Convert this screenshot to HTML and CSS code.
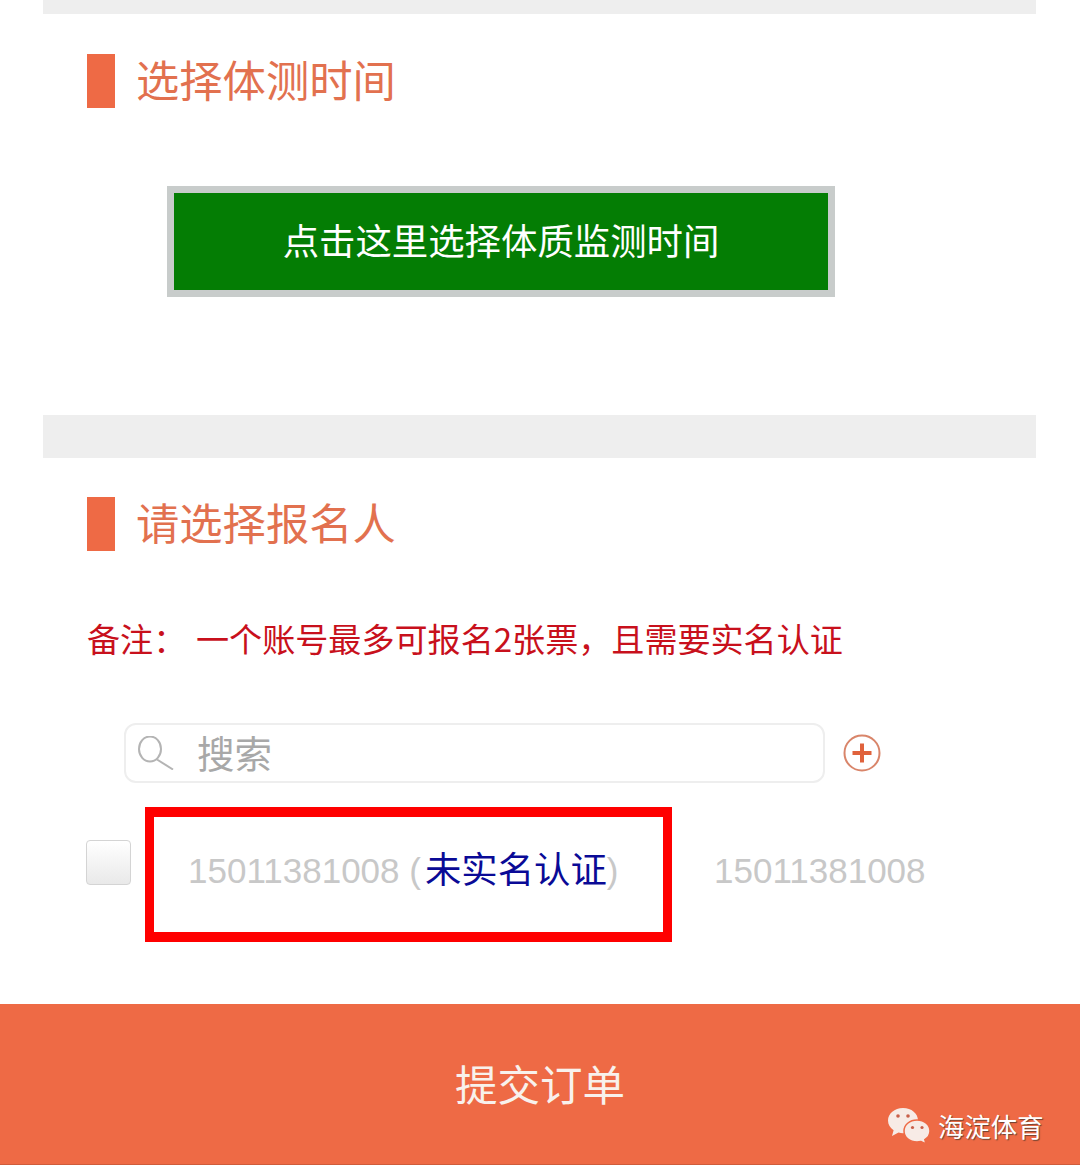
FILE: index.html

```html
<!DOCTYPE html>
<html lang="zh-CN">
<head>
    <meta charset="UTF-8">
    <meta name="viewport" content="width=device-width, initial-scale=1.0">
    <title>提交订单</title>
    <link rel="stylesheet" href="styles.css">
</head>
<body>
    <div class="container">
        <div class="band band-top"></div>

        <div class="section-head head-time">
            <span class="head-bar"></span>
            <h2>选择体测时间</h2>
        </div>
        <div class="time-row">
            <button type="button" class="time-btn">点击这里选择体质监测时间</button>
        </div>

        <div class="band band-mid"></div>

        <div class="section-head head-person">
            <span class="head-bar"></span>
            <h2>请选择报名人</h2>
        </div>
        <p class="note"><span class="note-label">备注：</span>一个账号最多可报名2张票，且需要实名认证</p>

        <div class="search-row">
            <div class="search-box">
                <svg class="search-icon" width="36" height="34" viewBox="0 0 36 34" fill="none" stroke="#b4b4b4" stroke-width="2">
                    <ellipse cx="12" cy="13" rx="11" ry="12.5"/>
                    <path d="M19 23.500l16 10"/>
                </svg>
                <span class="search-text">搜索</span>
            </div>
            <svg class="add-icon" width="38" height="38" viewBox="0 0 38 38" fill="none">
                <circle cx="19" cy="19" r="17.500" stroke="#d9856a" stroke-width="2"/>
                <path d="M19 9.500v19M9.500 19h19" stroke="#e0623c" stroke-width="4"/>
            </svg>
        </div>

        <div class="person-row">
            <span class="check"></span>
            <div class="person-box">
                <span class="phone">15011381008 (<span class="unverified">未实名认证</span>)</span>
            </div>
            <span class="phone phone-second">15011381008</span>
        </div>
    </div>

    <div class="submit-bar">
        <span class="submit-text">提交订单</span>
        <div class="watermark">
            <svg width="44" height="38" viewBox="0 0 44 38">
                <path d="M16 1C7.500 1 1 6.600 1 13.500c0 4 2.200 7.400 5.600 9.700L5 29l6.500-3.400c1.500.4 3 .6 4.500.6 8.500 0 15-5.700 15-12.700S24.500 1 16 1z" fill="#f7ebe6"/>
                <path d="M30 13c-7.500 0-13 4.900-13 11s5.500 11 13 11c1.400 0 2.700-.2 4-.5l5 2.500-1.200-4.400c3.500-2.100 5.200-5.100 5.200-8.600 0-6.100-5.500-11-13-11z" fill="#f7ebe6" stroke="#ee6a45" stroke-width="1.500"/>
                <circle cx="11" cy="9" r="1.800" fill="#c9604a"/>
                <circle cx="21" cy="9" r="1.800" fill="#c9604a"/>
                <circle cx="25.500" cy="20.500" r="1.600" fill="#c9604a"/>
                <circle cx="35" cy="20.500" r="1.600" fill="#c9604a"/>
            </svg>
            <span class="watermark-text">海淀体育</span>
        </div>
    </div>
</body>
</html>
```

FILE: styles.css

```css
body {
    font-family: "Noto Sans CJK SC", "Liberation Sans", sans-serif;
    margin: 0;
    padding: 0;
    background-color: #fff;
    height: 1176px;
    overflow: hidden;
}

.container {
    height: 1004px;
}

.band {
    margin: 0 44px 0 43px;
    background-color: #eeeeee;
}

.band-top {
    height: 14px;
}

.band-mid {
    height: 43px;
    margin-top: 118px;
}

.section-head {
    display: flex;
    align-items: center;
    gap: 21px;
    margin-left: 87px;
    height: 54px;
}

.head-time {
    margin-top: 40px;
}

.head-person {
    margin-top: 39px;
}

.head-bar {
    width: 28px;
    height: 54px;
    background-color: #ee6a45;
}

.section-head h2 {
    margin: 0 0 6px;
    font-size: 43.3px;
    font-weight: 400;
    line-height: 54px;
    color: #e2714f;
}

.time-row {
    margin: 78px 0 0 167px;
}

.time-btn {
    display: block;
    box-sizing: border-box;
    width: 668px;
    height: 111px;
    padding: 0 0 4px;
    border: 7px solid #c8cccb;
    background-color: #047d04;
    color: #fff;
    font-family: inherit;
    font-size: 36.4px;
    line-height: 1;
}

.note {
    margin: 64px 0 0 87px;
    font-size: 33.1px;
    line-height: 46px;
    color: #c8101c;
    white-space: nowrap;
}

.note-label {
    display: inline-block;
    width: 109px;
}

.search-row {
    display: flex;
    align-items: center;
    gap: 18px;
    margin: 62px 0 0 124px;
}

.search-box {
    box-sizing: border-box;
    display: flex;
    align-items: center;
    width: 701px;
    height: 60px;
    padding-left: 12px;
    border: 2px solid #eeeeee;
    border-radius: 12px;
}

.search-text {
    margin: 0 0 4px 23px;
    font-size: 37.5px;
    color: #a8a8a8;
}

.person-row {
    display: flex;
    align-items: flex-start;
    margin: 24px 0 0 86px;
}

.check {
    box-sizing: border-box;
    width: 45px;
    height: 45px;
    margin-top: 33px;
    border: 1px solid #d4d4d4;
    border-radius: 4px;
    background: linear-gradient(#ffffff, #e9e9e9);
}

.person-box {
    box-sizing: border-box;
    display: flex;
    align-items: center;
    width: 527px;
    height: 135px;
    margin-left: 14px;
    padding: 0 0 16px 34px;
    border-style: solid;
    border-width: 10px 9px;
    border-color: #ff0000;
}

.phone {
    font-family: "Liberation Sans", "Noto Sans CJK SC", sans-serif;
    font-size: 35px;
    color: #c8c8c8;
    white-space: nowrap;
}

.unverified {
    margin-left: 4px;
    color: #0a0a96;
    font-family: "Noto Sans CJK SC", sans-serif;
    font-size: 36.4px;
}

.phone-second {
    margin: 44px 0 0 42px;
}

.submit-bar {
    box-sizing: border-box;
    position: relative;
    display: flex;
    align-items: center;
    justify-content: center;
    height: 161px;
    padding-bottom: 4px;
    background-color: #ee6a45;
    border-bottom: 1px solid #cf5c3b;
}

.submit-text {
    font-size: 42.5px;
    color: #f8f1ec;
}

.watermark {
    position: absolute;
    left: 887px;
    top: 103px;
    display: flex;
    align-items: center;
    gap: 7px;
}

.watermark svg {
    display: block;
}

.watermark-text {
    font-size: 26.4px;
    line-height: 38px;
    color: #fff;
    text-shadow: 1px 1px 1px #6b4030;
}
```
